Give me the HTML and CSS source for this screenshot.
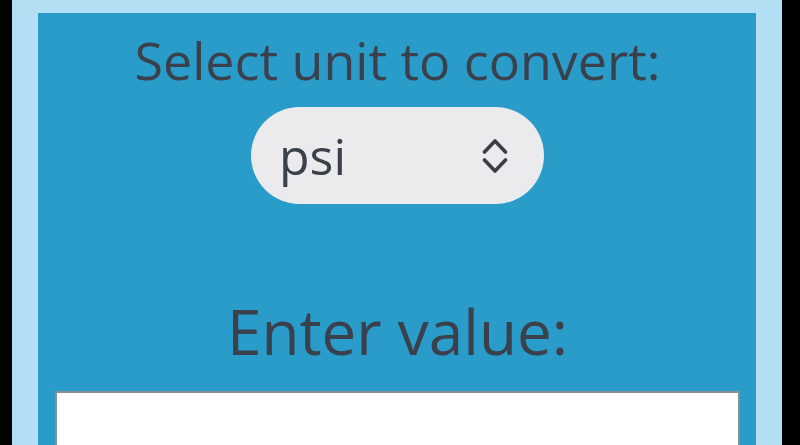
FILE: index.html
```html
<!DOCTYPE html>
<html>
<head>
<meta charset="utf-8">
<link rel="stylesheet" href="styles.css">
</head>
<body>
<div class="frame">
  <div class="panel">
    <label class="title">Select unit to convert:</label>
    <div class="select">
      <span class="select-value">psi</span>
      <svg class="chevrons" width="26" height="38" viewBox="0 0 26 38">
        <path d="M2.5 15 L13 4 L23.5 15" fill="none" stroke="#3a3f47" stroke-width="3.6" stroke-linecap="round" stroke-linejoin="round"/>
        <path d="M2.5 23 L13 34 L23.5 23" fill="none" stroke="#3a3f47" stroke-width="3.6" stroke-linecap="round" stroke-linejoin="round"/>
      </svg>
    </div>
    <label class="title title-big">Enter value:</label>
    <div class="input"></div>
  </div>
</div>
</body>
</html>
```
FILE: styles.css
```css
html, body {
  margin: 0;
  padding: 0;
  background: #000;
  height: 100%;
  overflow: hidden;
}
.frame {
  margin-left: 12px;
  width: 770px;
  height: 100%;
  background: #b2dff3;
  padding: 13px 26px 0 26px;
  box-sizing: border-box;
}
.panel {
  background: #299cca;
  height: 100%;
  display: flex;
  flex-direction: column;
  align-items: center;
  padding: 0 16px 0 17px;
  font-family: "Open Sans", "Noto Sans", sans-serif;
  color: #3a414c;
}
.panel > * {
  flex-shrink: 0;
}
.title {
  display: block;
  font-size: 52px;
  line-height: 60px;
  margin-top: 17px;
  white-space: nowrap;
}
.select {
  margin-top: 17px;
  width: 293px;
  height: 97px;
  box-sizing: border-box;
  border-radius: 49px;
  background: #ebebee;
  display: flex;
  align-items: center;
  justify-content: space-between;
  padding: 0 36px 0 28px;
}
.select-value {
  font-size: 50px;
  line-height: 60px;
}
.chevrons {
  display: block;
}
.title-big {
  font-size: 62px;
  line-height: 80px;
  margin-top: 87px;
}
.input {
  align-self: stretch;
  margin-top: 20px;
  flex-grow: 1;
  background: #fff;
  border: 2px solid #8a8f94;
  border-bottom: none;
}
```
